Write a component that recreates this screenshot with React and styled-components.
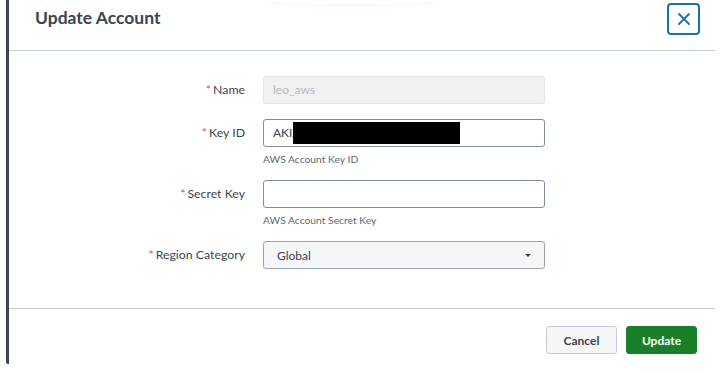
import { styled, createGlobalStyle } from 'styled-components';

const GlobalStyle = createGlobalStyle`
  html, body {
    margin: 0;
    padding: 0;
    background: #ffffff;
    font-family: Lato, "Open Sans", sans-serif;
  }
`;

const fields = [
  { id: 'name', label: 'Name', value: 'leo_aws', disabled: true },
  { id: 'key', label: 'Key ID', value: 'AKIA', help: 'AWS Account Key ID', redacted: true },
  { id: 'secret', label: 'Secret Key', value: '', help: 'AWS Account Secret Key' },
  { id: 'region', label: 'Region Category', value: 'Global', select: true },
];

const App = () => {
  return (
    <>
      <GlobalStyle />
      <Shell>
        <Edge />
        <Dialog>
          <Header>
            <Title>Update Account</Title>
            <CloseButton aria-label="Close">
              <svg width="14" height="14" viewBox="0 0 14 14">
                <path d="M2 2 L12 12 M12 2 L2 12" stroke="#1a6fb5" strokeWidth="1.8" strokeLinecap="round" />
              </svg>
            </CloseButton>
          </Header>
          <Body>
            {fields.map((f) => (
              <Row key={f.id}>
                <Label>
                  <Star>*</Star>
                  {f.label}
                </Label>
                <Control>
                  {f.select ? (
                    <Select>
                      <span>{f.value}</span>
                      <Caret />
                    </Select>
                  ) : (
                    <Input $disabled={f.disabled}>
                      {f.value}
                      {f.redacted && <Redaction />}
                    </Input>
                  )}
                  {f.help && <Help>{f.help}</Help>}
                </Control>
              </Row>
            ))}
          </Body>
          <Footer>
            <Button>Cancel</Button>
            <Button $primary>Update</Button>
          </Footer>
        </Dialog>
      </Shell>
    </>
  );
};

const Shell = styled.div`
  display: flex;
  width: 722px;
  height: 373px;
  overflow: hidden;
  position: relative;
  &::before {
    content: '';
    position: absolute;
    top: -6px;
    left: 262px;
    width: 180px;
    height: 10px;
    border-radius: 50%;
    box-shadow: 0 0 8px rgba(0, 0, 0, 0.05);
  }
`;

const Edge = styled.div`
  width: 3px;
  height: 364px;
  margin-left: 6px;
  background: #3c444d;
  border-bottom-left-radius: 2px;
  flex-shrink: 0;
`;

const Dialog = styled.div`
  flex: 1;
  margin-right: 7px;
  display: flex;
  flex-direction: column;
`;

const Header = styled.div`
  height: 50px;
  border-bottom: 1px solid #c3cbd4;
  display: flex;
  align-items: flex-start;
  justify-content: space-between;
  padding-left: 26px;
  padding-right: 15px;
`;

const Title = styled.h1`
  margin: 0;
  padding-top: 7px;
  font-size: 17.5px;
  font-weight: 700;
  color: #3c444d;
`;

const CloseButton = styled.button`
  margin-top: 3px;
  width: 33px;
  height: 32px;
  border: 2px solid #1a6fb5;
  border-radius: 4px;
  background: #ffffff;
  display: flex;
  align-items: center;
  justify-content: center;
  padding: 0;
  box-sizing: border-box;
`;

const Body = styled.div`
  padding: 25px 0 39px;
  display: flex;
  flex-direction: column;
  gap: 15px;
  border-bottom: 1px solid #c3cbd4;
`;

const Row = styled.div`
  display: grid;
  grid-template-columns: 236px 282px;
  column-gap: 18px;
  align-items: start;
`;

const Label = styled.div`
  text-align: right;
  font-size: 12.3px;
  color: #3c444d;
  line-height: 28px;
`;

const Star = styled.span`
  color: #dc4e41;
  margin-right: 2px;
`;

const Control = styled.div`
  display: flex;
  flex-direction: column;
`;

const Input = styled.div`
  position: relative;
  height: 28px;
  box-sizing: border-box;
  border: 1px solid ${(p) => (p.$disabled ? '#e1e4e8' : '#818d99')};
  background: ${(p) => (p.$disabled ? '#f0f1f3' : '#ffffff')};
  color: ${(p) => (p.$disabled ? '#b4bac1' : '#3c444d')};
  border-radius: 3px;
  padding: 0 9px;
  font-size: 12px;
  line-height: 26px;
`;

const Redaction = styled.div`
  position: absolute;
  left: 29px;
  top: 2px;
  width: 167px;
  height: 22px;
  background: #000000;
`;

const Select = styled.div`
  height: 28px;
  box-sizing: border-box;
  border: 1px solid #9aa4ae;
  background: #f5f6f8;
  border-radius: 3px;
  padding: 0 13px 0 13px;
  display: flex;
  align-items: center;
  justify-content: space-between;
  font-size: 12px;
  color: #3c444d;
`;

const Caret = styled.span`
  width: 0;
  height: 0;
  border-left: 3.5px solid transparent;
  border-right: 3.5px solid transparent;
  border-top: 3.5px solid #3c444d;
`;

const Help = styled.div`
  font-size: 10.3px;
  color: #5c6773;
  margin-top: 6px;
  line-height: 12px;
`;

const Footer = styled.div`
  display: flex;
  justify-content: flex-end;
  gap: 9px;
  padding: 17px 18px 0 0;
`;

const Button = styled.button`
  height: 28px;
  min-width: 71px;
  padding: 0 14px;
  box-sizing: border-box;
  border-radius: 3px;
  font-family: Lato, "Open Sans", sans-serif;
  font-size: 12px;
  font-weight: 700;
  border: 1px solid ${(p) => (p.$primary ? '#1a7f2b' : '#c3cbd4')};
  background: ${(p) => (p.$primary ? '#1a7f2b' : '#f5f6f8')};
  color: ${(p) => (p.$primary ? '#ffffff' : '#3c444d')};
`;

export default App;
